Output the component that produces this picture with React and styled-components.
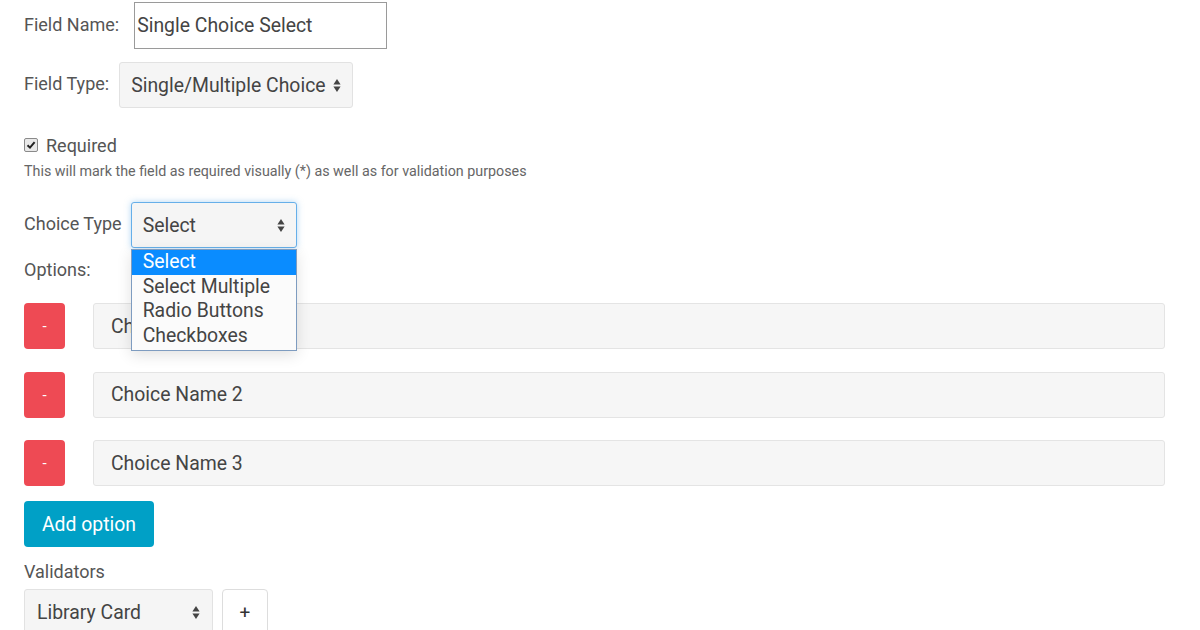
import styled, { createGlobalStyle } from "styled-components";

const GlobalStyle = createGlobalStyle`
  body {
    margin: 0;
    background: #fff;
    font-family: Roboto, "Liberation Sans", sans-serif;
    color: #555;
  }
`;

function Arrows() {
  return (
    <ArrowIcon width="8" height="15" viewBox="0 0 8 15">
      <path d="M4 1 L7.6 6.5 L0.4 6.5 Z" fill="#444" />
      <path d="M4 14 L7.6 8.5 L0.4 8.5 Z" fill="#444" />
    </ArrowIcon>
  );
}

const choices = ["Choice Name 1", "Choice Name 2", "Choice Name 3"];
const choiceTypes = ["Select", "Select Multiple", "Radio Buttons", "Checkboxes"];

export default function App() {
  return (
    <Page>
      <GlobalStyle />
      <InlineRow>
        <Label>Field Name:</Label>
        <TextBox>Single Choice Select</TextBox>
      </InlineRow>
      <InlineRow $top={13} $gap={10}>
        <Label>Field Type:</Label>
        <SelectBox $width={234}>
          <span>Single/Multiple Choice</span>
          <Arrows />
        </SelectBox>
      </InlineRow>

      <CheckRow>
        <CheckBox>
          <svg width="10" height="10" viewBox="0 0 10 10">
            <path d="M1.5 5.2 L4 7.6 L8.6 2.2" stroke="#222" strokeWidth="2" fill="none" />
          </svg>
        </CheckBox>
        <span>Required</span>
      </CheckRow>
      <Help>This will mark the field as required visually (*) as well as for validation purposes</Help>

      <InlineRow $top={21} $gap={9}>
        <Label>Choice Type</Label>
        <SelectWrap>
          <SelectBox $width={166} $focus>
            <span>Select</span>
            <Arrows />
          </SelectBox>
          <Dropdown>
            {choiceTypes.map((t, i) => (
              <DropItem key={t} $active={i === 0}>{t}</DropItem>
            ))}
          </Dropdown>
        </SelectWrap>
      </InlineRow>

      <BlockLabel $top={10}>Options:</BlockLabel>

      <Options>
        {choices.map((c) => (
          <OptionRow key={c}>
            <RemoveButton>-</RemoveButton>
            <ChoiceInput>{c}</ChoiceInput>
          </OptionRow>
        ))}
      </Options>

      <AddButton>Add option</AddButton>

      <BlockLabel $top={13}>Validators</BlockLabel>
      <InlineRow $top={5} $gap={9}>
        <SelectBox $width={189} $pad={13}>
          <span>Library Card</span>
          <Arrows />
        </SelectBox>
        <PlusButton>+</PlusButton>
      </InlineRow>
    </Page>
  );
}

const Page = styled.div`
  padding: 2px 24px 0 24px;
  width: 1141px;
  height: 628px;
  overflow: hidden;
`;

const InlineRow = styled.div`
  display: flex;
  align-items: center;
  gap: ${(p) => p.$gap ?? 15}px;
  margin-top: ${(p) => p.$top ?? 0}px;
`;

const Label = styled.span`
  font-size: 18px;
  color: #555;
  margin-top: -3px;
`;

const BlockLabel = styled.div`
  font-size: 18px;
  line-height: 24px;
  color: #555;
  margin-top: ${(p) => p.$top ?? 0}px;
`;

const TextBox = styled.div`
  box-sizing: border-box;
  width: 253px;
  height: 47px;
  border: 1px solid #9a9a9a;
  padding: 0 2px;
  display: flex;
  align-items: center;
  font-size: 19.4px;
  color: #444;
`;

const SelectBox = styled.div`
  box-sizing: border-box;
  width: ${(p) => p.$width}px;
  height: 46px;
  display: flex;
  align-items: center;
  justify-content: space-between;
  padding: 0 ${(p) => (p.$pad ?? 12) - 1}px;
  background: #f5f5f5;
  border: 1px solid ${(p) => (p.$focus ? "#66afe9" : "#e2e2e2")};
  border-radius: 3px;
  box-shadow: ${(p) => (p.$focus ? "0 0 6px rgba(102,175,233,0.5)" : "none")};
  font-size: 19.4px;
  color: #444;
`;

const ArrowIcon = styled.svg`
  flex: none;
`;

const CheckRow = styled.div`
  display: flex;
  align-items: center;
  gap: 8px;
  margin-top: 26px;
  font-size: 18px;
  line-height: 24px;
`;

const CheckBox = styled.span`
  box-sizing: border-box;
  width: 14px;
  height: 14px;
  border: 1px solid #8a8a8a;
  border-radius: 2px;
  background: #e9e9e9;
  display: flex;
  align-items: center;
  justify-content: center;
  margin-top: -2px;
`;

const Help = styled.div`
  margin-top: 3px;
  font-size: 14.3px;
  line-height: 20px;
  color: #666;
`;

const SelectWrap = styled.div`
  position: relative;
`;

const Dropdown = styled.div`
  position: absolute;
  top: 47px;
  left: 0;
  box-sizing: border-box;
  width: 166px;
  border: 1px solid #7e9cc0;
  background: #fbfbfb;
  padding-bottom: 2px;
  box-shadow: 0 4px 14px rgba(0, 0, 0, 0.12);
  z-index: 2;
`;

const DropItem = styled.div`
  height: 24.5px;
  line-height: 24.5px;
  padding-left: 11px;
  font-size: 19.4px;
  color: ${(p) => (p.$active ? "#fff" : "#444")};
  background: ${(p) => (p.$active ? "#0a8cff" : "transparent")};
`;

const Options = styled.div`
  display: flex;
  flex-direction: column;
  gap: 22.5px;
  margin-top: 21px;
`;

const OptionRow = styled.div`
  display: flex;
  align-items: center;
  gap: 28px;
`;

const RemoveButton = styled.div`
  width: 41px;
  height: 46px;
  flex: none;
  border-radius: 4px;
  background: #ee4a54;
  color: #fff;
  font-size: 15px;
  display: flex;
  align-items: center;
  justify-content: center;
`;

const ChoiceInput = styled.div`
  box-sizing: border-box;
  flex: 1;
  height: 46px;
  display: flex;
  align-items: center;
  padding-left: 17px;
  background: #f6f6f6;
  border: 1px solid #e4e4e4;
  border-radius: 3px;
  font-size: 19.4px;
  color: #444;
`;

const AddButton = styled.div`
  margin-top: 15px;
  width: 130px;
  height: 46px;
  border-radius: 4px;
  background: #00a0c6;
  color: #fff;
  font-size: 19.4px;
  display: flex;
  align-items: center;
  justify-content: center;
`;

const PlusButton = styled.div`
  box-sizing: border-box;
  width: 46px;
  height: 46px;
  border: 1px solid #ddd;
  border-radius: 4px;
  background: #fff;
  color: #333;
  font-size: 19px;
  display: flex;
  align-items: center;
  justify-content: center;
`;
